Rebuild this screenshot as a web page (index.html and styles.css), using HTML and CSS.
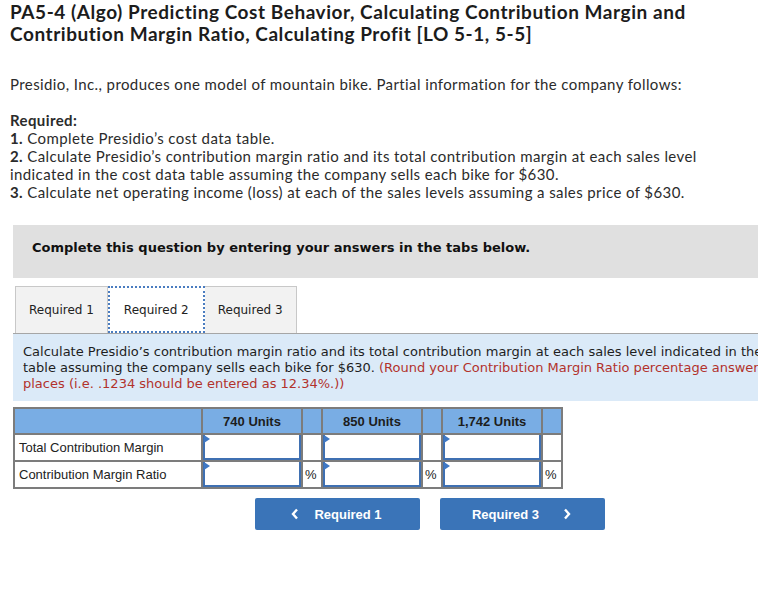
FILE: index.html
```html
<!DOCTYPE html>
<html lang="en">
<head>
    <meta charset="UTF-8">
    <meta name="viewport" content="width=device-width, initial-scale=1.0">
    <title>PA5-4 (Algo)</title>
    <link rel="stylesheet" href="styles.css">
</head>
<body>

<div class="question">
    <h1 class="title">PA5-4 (Algo) Predicting Cost Behavior, Calculating Contribution Margin and Contribution Margin Ratio, Calculating Profit [LO 5-1, 5-5]</h1>
    <p class="intro">Presidio, Inc., produces one model of mountain bike. Partial information for the company follows:</p>
    <div class="required">
        <b>Required:</b><br>
        <b>1.</b> Complete Presidio’s cost data table.<br>
        <b>2.</b> Calculate Presidio’s contribution margin ratio and its total contribution margin at each sales level indicated in the cost data table assuming the company sells each bike for $630.<br>
        <b>3.</b> Calculate net operating income (loss) at each of the sales levels assuming a sales price of $630.
    </div>
</div>

<div class="work-area">
    <div class="notice">Complete this question by entering your answers in the tabs below.</div>

    <div class="tabs">
        <div class="tab">Required 1</div>
        <div class="tab active">Required 2</div>
        <div class="tab">Required 3</div>
    </div>

    <div class="tab-panel">
        <div class="instructions">
            Calculate Presidio’s contribution margin ratio and its total contribution margin at each sales level indicated in the cost data<br>
            table assuming the company sells each bike for $630. <span class="hint">(Round your Contribution Margin Ratio percentage answers to 2 decimal<br>
            places (i.e. .1234 should be entered as 12.34%.))</span>
        </div>

        <table class="answer-table">
            <tr class="head">
                <th class="label"></th>
                <th class="val">740 Units</th>
                <th class="pct"></th>
                <th class="val">850 Units</th>
                <th class="pct"></th>
                <th class="val">1,742 Units</th>
                <th class="pct"></th>
            </tr>
            <tr>
                <td class="label">Total Contribution Margin</td>
                <td class="val"><div class="field"><span class="flag"></span><input type="text"></div></td>
                <td class="pct"></td>
                <td class="val"><div class="field"><span class="flag"></span><input type="text"></div></td>
                <td class="pct"></td>
                <td class="val"><div class="field"><span class="flag"></span><input type="text"></div></td>
                <td class="pct"></td>
            </tr>
            <tr>
                <td class="label">Contribution Margin Ratio</td>
                <td class="val"><div class="field"><span class="flag"></span><input type="text"></div></td>
                <td class="pct">%</td>
                <td class="val"><div class="field"><span class="flag"></span><input type="text"></div></td>
                <td class="pct">%</td>
                <td class="val"><div class="field"><span class="flag"></span><input type="text"></div></td>
                <td class="pct">%</td>
            </tr>
        </table>

        <div class="nav">
            <button class="nav-btn prev">
                <svg width="8" height="12" viewBox="0 0 8 12"><polyline points="6,1.5 2,6 6,10.5" fill="none" stroke="#fff" stroke-width="2.4"/></svg>
                <span>Required 1</span>
            </button>
            <button class="nav-btn next">
                <span>Required 3</span>
                <svg width="8" height="12" viewBox="0 0 8 12"><polyline points="2,1.5 6,6 2,10.5" fill="none" stroke="#fff" stroke-width="2.4"/></svg>
            </button>
        </div>
    </div>
</div>

</body>
</html>
```

FILE: styles.css
```css
body {
    margin: 0;
    padding: 0;
    background-color: #fff;
    font-family: Lato, "Liberation Sans", sans-serif;
    color: #2b2b2b;
}
.question {
    width: 705px;
    padding: 0 10px;
}
.title {
    margin: 0;
    padding-top: 1px;
    font-size: 19px;
    line-height: 22px;
    font-weight: bold;
    letter-spacing: 0.55px;
    color: #1c1c1c;
}
.intro {
    margin: 30px 0 0 0;
    font-size: 15px;
    line-height: 18px;
    letter-spacing: 0.4px;
}
.required {
    margin-top: 18px;
    font-size: 15px;
    line-height: 18px;
    letter-spacing: 0.4px;
}
.work-area {
    width: 745px;
    margin: 24px 0 0 13px;
    overflow: hidden;
    font-family: "DejaVu Sans", Verdana, sans-serif;
}
.notice {
    background-color: #e0e0e0;
    padding: 12px 19px 20px;
    font-size: 13px;
    font-weight: bold;
    line-height: 21px;
    color: #111;
}
.tabs {
    display: flex;
    margin: 8px 0 0 2px;
}
.tab {
    padding: 14px 13px 14px;
    background-color: #f2f2f2;
    border: 1px solid #c8c8c8;
    border-bottom: none;
    font-size: 12px;
    line-height: 18px;
    color: #222;
}
.tab + .tab {
    border-left: none;
}
.tab.active {
    background-color: #fff;
    border: 2px dotted #4a7cc0;
    padding: 13px 14px 12px;
}
.tab-panel {
    border-top: 1px solid #a6a6a6;
}
.instructions {
    background-color: #dbeaf8;
    padding: 10px 10px 9px;
    font-size: 13px;
    line-height: 16px;
    color: #1e1e1e;
    white-space: nowrap;
}
.hint {
    color: #b2322c;
}
.answer-table {
    margin-top: 6px;
    border-collapse: collapse;
    font-family: "Liberation Sans", Arial, sans-serif;
    font-size: 13px;
    color: #222;
}
.answer-table th,
.answer-table td {
    border: 2px solid #7c7c7c;
    padding: 0;
}
.answer-table .head th {
    background-color: #79ade4;
    height: 24px;
    font-weight: bold;
    color: #1d1d1d;
}
.answer-table td {
    height: 25px;
}
.answer-table .label {
    width: 182px;
    padding-left: 4px;
    text-align: left;
}
.answer-table .val {
    width: 98px;
}
.answer-table .pct {
    width: 16px;
    padding-left: 2px;
    text-align: left;
}
.field {
    position: relative;
    height: 25px;
}
.field input {
    display: block;
    width: 100%;
    height: 25px;
    box-sizing: border-box;
    border: 2px solid #3f70b2;
    border-top: none;
    margin: 0;
    padding: 0 4px;
    font-size: 13px;
    background: #fff;
}
.flag {
    position: absolute;
    left: 1px;
    top: 0;
    width: 0;
    height: 0;
    border-top: 4px solid transparent;
    border-bottom: 4px solid transparent;
    border-left: 6px solid #3f78c4;
}
.nav {
    display: flex;
    gap: 20px;
    margin: 9px 0 0 242px;
}
.nav-btn {
    display: flex;
    align-items: center;
    justify-content: center;
    gap: 15px;
    width: 165px;
    height: 32px;
    border: none;
    border-radius: 2px;
    background-color: #3a74b8;
    color: #fff;
    font-family: "Liberation Sans", Arial, sans-serif;
    font-size: 13px;
    font-weight: bold;
    cursor: pointer;
}
.nav-btn.prev {
    padding-right: 8px;
}
.nav-btn.next {
    gap: 24px;
    padding-left: 4px;
}
```
